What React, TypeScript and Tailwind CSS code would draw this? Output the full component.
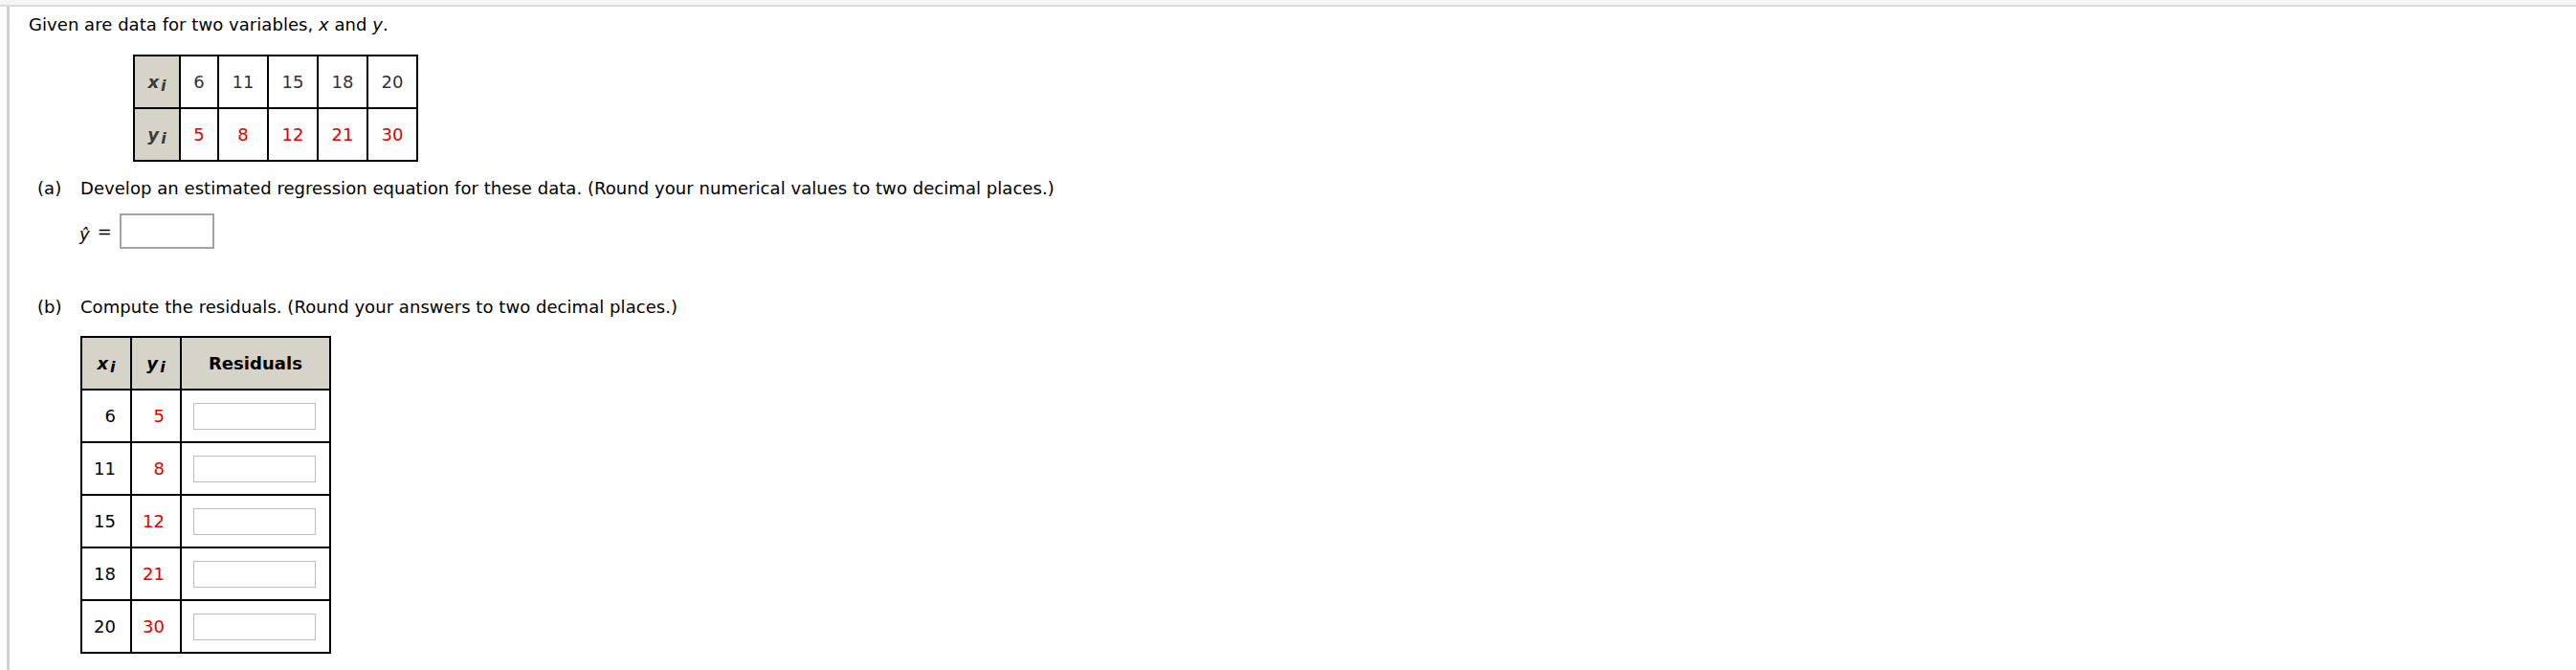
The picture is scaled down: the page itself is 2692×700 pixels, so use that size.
import React from "react";

const Xi = ({ cls }: { cls: string }) => (
  <span className={`font-bold italic ${cls}`}>
    x<sub className="text-[16px] relative top-[3px] ml-[2px]">i</sub>
  </span>
);
const Yi = ({ cls }: { cls: string }) => (
  <span className={`font-bold italic ${cls}`}>
    y<sub className="text-[16px] relative top-[3px] ml-[2px]">i</sub>
  </span>
);

const xs = [6, 11, 15, 18, 20];
const ys = [5, 8, 12, 21, 30];

export default function App() {
  return (
    <div className="w-[2692px] h-[700px] bg-white flex flex-col font-['DejaVu_Sans',Verdana,sans-serif] text-[18px] tracking-[0.05px] text-black">
      <div className="h-[7px] bg-[#f5f5f5] border-b-2 border-[#dcdcdc] shrink-0" />
      <div className="flex-1 ml-[7px] border-l-[3px] border-[#cfcfcf] pl-[20px]">
        <p className="leading-[24px] pt-[7px]">
          Given are data for two variables, <i>x</i> and <i>y</i>.
        </p>

        <div className="mt-[19px] ml-[109px] inline-grid grid-cols-[46px_38px_50px_50px_50px_50px] grid-rows-[53px_53px] gap-[2px] p-[2px] bg-black">
          <div className="bg-[#d6d3c9] flex items-center justify-center">
            <Xi cls="text-[#3a3a3a]" />
          </div>
          {xs.map((v) => (
            <div key={"x" + v} className="bg-white flex items-center justify-center text-[#333]">
              {v}
            </div>
          ))}
          <div className="bg-[#d6d3c9] flex items-center justify-center">
            <Yi cls="text-[#3a3a3a]" />
          </div>
          {ys.map((v) => (
            <div key={"y" + v} className="bg-white flex items-center justify-center text-[#e00000]">
              {v}
            </div>
          ))}
        </div>

        <div className="mt-[16px] flex leading-[24px] pl-[9px]">
          <span className="w-[45px] shrink-0">(a)</span>
          <span>
            Develop an estimated regression equation for these data. (Round your numerical values to two decimal places.)
          </span>
        </div>
        <div className="mt-[14px] ml-[53px] flex items-center h-[37px]">
          <i className="mr-[8px] relative top-[3px]">ŷ</i>
          <span className="mr-[8px]">=</span>
          <div className="w-[99px] h-[37px] border-2 border-[#a3a3a3] bg-white" />
        </div>

        <div className="mt-[49px] flex leading-[24px] pl-[9px]">
          <span className="w-[45px] shrink-0">(b)</span>
          <span>Compute the residuals. (Round your answers to two decimal places.)</span>
        </div>

        <div className="mt-[18px] ml-[54px] inline-grid grid-cols-[50px_50px_154px] auto-rows-[53px] gap-[2px] p-[2px] bg-black">
          <div className="bg-[#d6d3c9] flex items-center justify-center">
            <Xi cls="text-black" />
          </div>
          <div className="bg-[#d6d3c9] flex items-center justify-center">
            <Yi cls="text-black" />
          </div>
          <div className="bg-[#d6d3c9] flex items-center justify-center font-bold">Residuals</div>
          {xs.map((v, i) => (
            <React.Fragment key={i}>
              <div className="bg-white flex items-center justify-end pr-[15px]">{v}</div>
              <div className="bg-white flex items-center justify-end pr-[16px] text-[#e00000]">{ys[i]}</div>
              <div className="bg-white flex items-center pl-[12px]">
                <div className="w-[128px] h-[28px] border border-[#bdbdbd] bg-white" />
              </div>
            </React.Fragment>
          ))}
        </div>
      </div>
    </div>
  );
}
